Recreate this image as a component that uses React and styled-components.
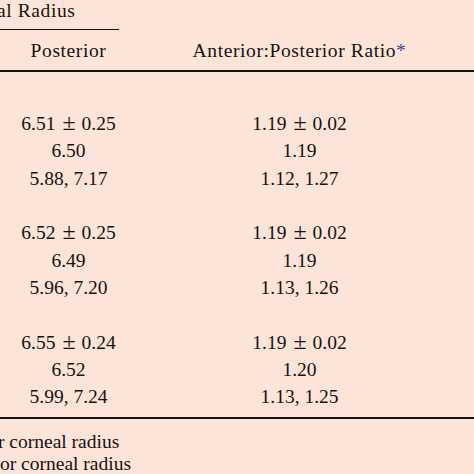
import React from 'react';
import styled, { createGlobalStyle } from 'styled-components';

const GlobalStyle = createGlobalStyle`
  html, body {
    margin: 0;
    padding: 0;
    background: #fde4d8;
  }
`;

const Page = styled.div`
  width: 474px;
  height: 474px;
  overflow: hidden;
  background: #fde4d8;
  color: #151312;
  font-family: 'Liberation Serif', 'Times New Roman', serif;
  font-size: 19.5px;
`;

const SpanHeader = styled.div`
  width: 119px;
  line-height: 21px;
  padding-bottom: 8px;
  border-bottom: 1.5px solid #151312;
  letter-spacing: 0.6px;
  white-space: nowrap;
  overflow: hidden;

  span {
    margin-left: -3px;
  }
`;

const Columns = styled.div`
  display: grid;
  grid-template-columns: 137px 325px;
  text-align: center;
  white-space: nowrap;
`;

const HeaderRow = styled(Columns)`
  margin-top: 6.5px;
  padding-bottom: 6.5px;
  line-height: 27px;
  letter-spacing: 0.6px;
  border-bottom: 2px solid #151312;
`;

const Star = styled.span`
  color: #3644a6;
`;

const Body = styled.div`
  padding: 10.7px 0 6.5px;
  border-bottom: 2px solid #151312;
`;

const Row = styled(Columns)`
  height: 27.35px;
  line-height: 27.35px;
`;

const Pm = styled.span`
  font-size: 24px;
  line-height: 0;
  margin: 0 6px 0 7px;
`;

const Notes = styled.div`
  padding-top: 12px;
  line-height: 22px;
  white-space: nowrap;
`;

const Note = styled.div`
  margin-left: ${(p) => p.$shift || 0}px;
`;

const groups = [
  [
    ['6.51', '0.25', '1.19', '0.02'],
    ['6.50', '1.19'],
    ['5.88, 7.17', '1.12, 1.27'],
  ],
  [
    ['6.52', '0.25', '1.19', '0.02'],
    ['6.49', '1.19'],
    ['5.96, 7.20', '1.13, 1.26'],
  ],
  [
    ['6.55', '0.24', '1.19', '0.02'],
    ['6.52', '1.20'],
    ['5.99, 7.24', '1.13, 1.25'],
  ],
];

const MeanSd = ({ mean, sd }) => (
  <div>
    {mean}
    <Pm>±</Pm>
    {sd}
  </div>
);

export default function App() {
  return (
    <Page>
      <GlobalStyle />
      <SpanHeader>
        <span>al Radius</span>
      </SpanHeader>
      <HeaderRow>
        <div>Posterior</div>
        <div>
          Anterior:Posterior Ratio<Star>*</Star>
        </div>
      </HeaderRow>
      <Body>
        {groups.map((g, gi) => (
          <React.Fragment key={gi}>
            <Row />
            <Row>
              <MeanSd mean={g[0][0]} sd={g[0][1]} />
              <MeanSd mean={g[0][2]} sd={g[0][3]} />
            </Row>
            <Row>
              <div>{g[1][0]}</div>
              <div>{g[1][1]}</div>
            </Row>
            <Row>
              <div>{g[2][0]}</div>
              <div>{g[2][1]}</div>
            </Row>
          </React.Fragment>
        ))}
      </Body>
      <Notes>
        <Note $shift={-2}>r corneal radius</Note>
        <Note>or corneal radius</Note>
      </Notes>
    </Page>
  );
}
